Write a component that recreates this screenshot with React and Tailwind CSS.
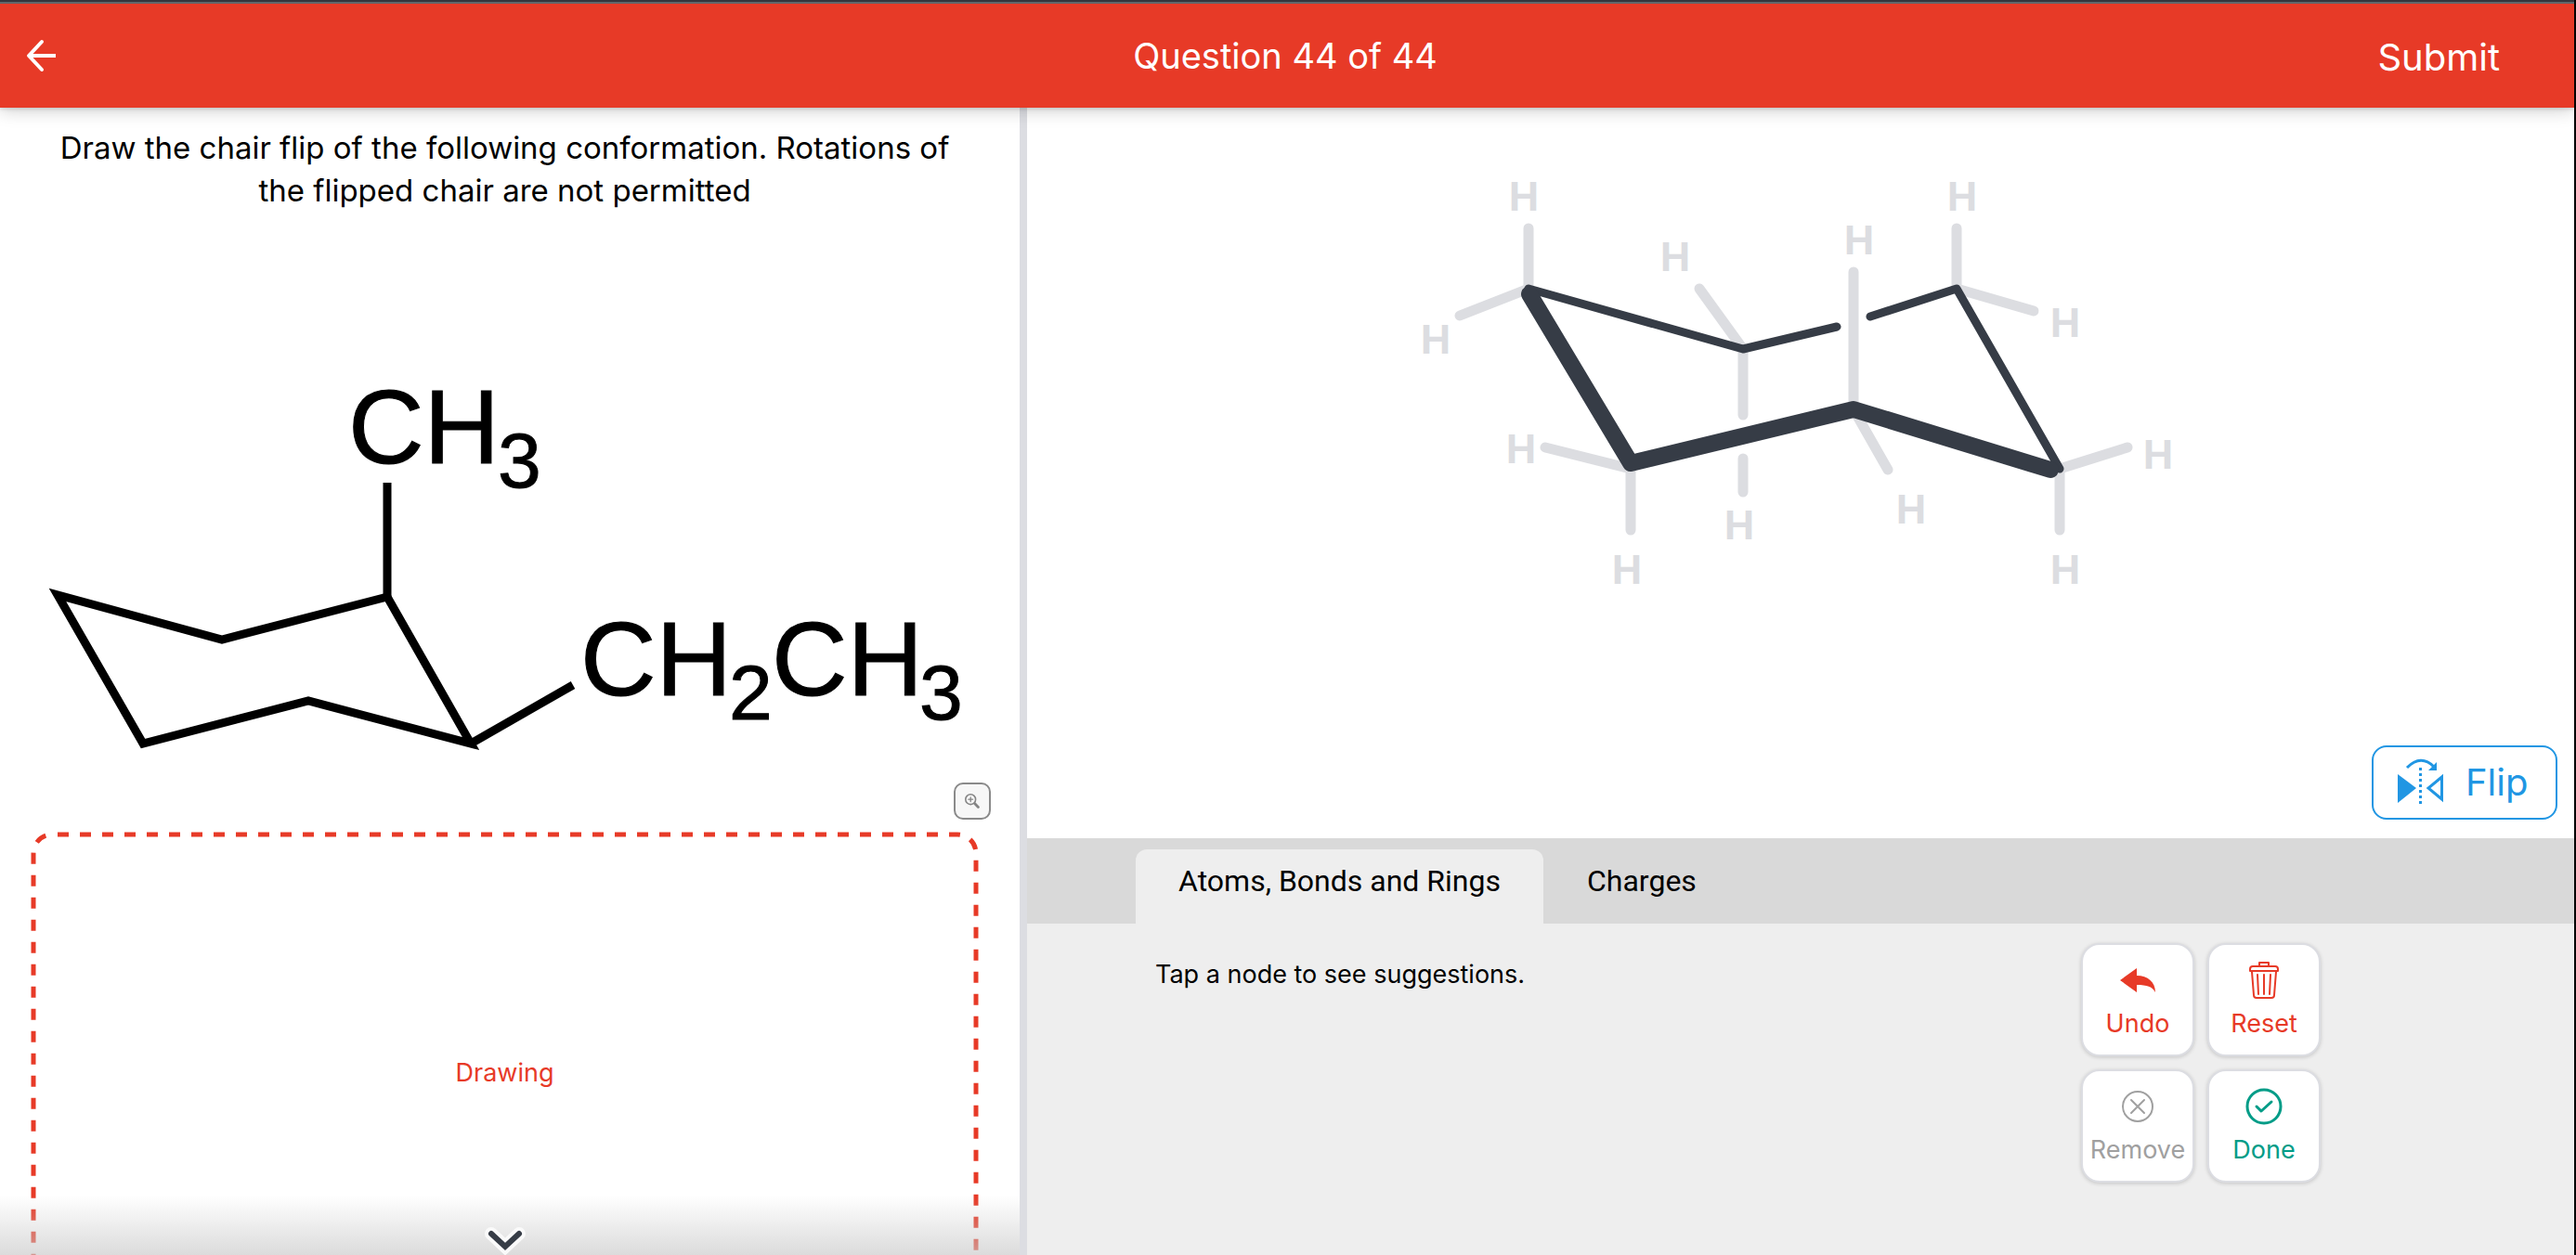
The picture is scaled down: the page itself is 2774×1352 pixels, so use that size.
import React from "react";

const HYDROGEN_BONDS = [
  [126, 121, 126, 56],
  [126, 121, 52, 150],
  [357, 186, 310, 121],
  [357, 186, 357, 257],
  [357, 304, 357, 340],
  [236, 315, 144, 292],
  [236, 315, 236, 381],
  [476, 251, 476, 103],
  [476, 251, 513, 316],
  [587, 121, 587, 56],
  [587, 121, 670, 145],
  [698, 315, 771, 292],
  [698, 315, 698, 381],
];

const HYDROGENS = [
  [121, 37],
  [26, 191],
  [284, 102],
  [118, 309],
  [232, 439],
  [353, 391],
  [482, 84],
  [593, 37],
  [704, 173],
  [804, 315],
  [538, 374],
  [704, 439],
];

function Header() {
  return (
    <header className="relative z-10 shrink-0 border-t-2 border-[#34363d] bg-[#e73a27] text-white shadow-[0_2px_18px_rgba(0,0,0,0.22),0_1px_4px_rgba(0,0,0,0.15)]">
      <div className="grid h-[114px] grid-cols-3 items-center border-t-2 border-[#61666a]">
        <button aria-label="Back" className="ml-7 w-9">
          <svg viewBox="0 0 36 36" className="size-9" fill="none" stroke="white" strokeWidth="4">
            <path d="M32 18H3" />
            <path d="M17 3L3 18l14 15" strokeLinecap="round" strokeLinejoin="round" />
          </svg>
        </button>
        <h1 className="pr-1 text-center text-[38px] leading-[48px]">Question 44 of 44</h1>
        <button className="mt-1 mr-20 justify-self-end text-[40px] leading-[48px]">Submit</button>
      </div>
    </header>
  );
}

function PromptMolecule() {
  return (
    <svg viewBox="0 -20 1019 460" className="mt-[152px] w-full shrink-0" role="img" aria-label="Chair conformation with methyl and ethyl groups">
      <g fill="none" stroke="#000" strokeWidth="9" strokeMiterlimit="10">
        <path d="M383 243L205 289L28 241L120 401L298 355L473 401Z" />
        <path d="M383 246V120" />
        <path d="M473 401L583 338" />
      </g>
      <g fontFamily="Liberation Sans, Arial, sans-serif" fontSize="113" stroke="#000" strokeWidth="1">
        <text x="341" y="99">
          CH<tspan x="502" y="125" fontSize="84">3</tspan>
        </text>
        <text x="591" y="349">
          CH<tspan x="751" y="375" fontSize="84">2</tspan>
          <tspan x="797" y="349">CH</tspan>
          <tspan x="956" y="375" fontSize="84">3</tspan>
        </text>
      </g>
    </svg>
  );
}

function QuestionPane() {
  return (
    <section className="relative flex w-[1106px] shrink-0 flex-col overflow-hidden border-r-8 border-[#dcdde2] bg-white pr-[45px] pl-[34px]">
      <p className="mt-5 px-6 text-center text-[33px] leading-[46px]">
        Draw the chair flip of the following conformation. Rotations of the flipped chair are not permitted
      </p>
      <PromptMolecule />
      <button aria-label="Zoom in" className="mt-[3px] -mr-3.5 flex size-10 shrink-0 items-center justify-center self-end rounded-[10px] border-2 border-[#8a8a8a] bg-[#f7f7f7]">
        <svg viewBox="0 0 16 16" className="size-4" fill="none" stroke="#858585" strokeLinecap="round">
          <circle cx="6.2" cy="6.2" r="5.4" strokeWidth="1.6" />
          <path d="M6.2 3.9v4.6M3.9 6.2h4.6" strokeWidth="1.3" />
          <path d="M10.8 10.8l3.6 3.6" strokeWidth="2.8" />
        </svg>
      </button>
      <div className="relative mt-[14px] flex h-[519px] shrink-0 items-center justify-center text-[27px] text-[#e73a27]">
        <svg className="absolute inset-0.5 h-[calc(100%-4px)] w-[calc(100%-4px)] overflow-visible" fill="none" aria-hidden="true">
          <rect width="100%" height="100%" rx="20" stroke="#e73a27" strokeWidth="5" strokeDasharray="12 12" strokeDashoffset="-6" />
        </svg>
        Drawing
      </div>
      <div className="pointer-events-none absolute inset-x-0 bottom-0 flex h-16 items-end justify-center bg-linear-to-b from-transparent to-[#c8c8c8]/65 pr-[11px]">
        <svg viewBox="0 0 48 32" className="h-8 w-12" fill="none" strokeLinecap="round">
          <path d="M9 9l15 14L39 9" stroke="#fafafa" strokeWidth="14" />
          <path d="M9 9l15 14L39 9" stroke="#363c46" strokeWidth="6" />
        </svg>
      </div>
    </section>
  );
}

function Canvas() {
  return (
    <div className="relative flex min-h-0 flex-1 items-start justify-center bg-white">
      <svg viewBox="0 -20 838 480" className="mt-[54px] h-[480px] w-[838px]" role="img" aria-label="Cyclohexane chair">
        <g stroke="#dcdde1" strokeWidth="11" strokeLinecap="round">
          {HYDROGEN_BONDS.map(([x1, y1, x2, y2]) => (
            <line key={`${x1}-${x2}-${y2}`} x1={x1} y1={y1} x2={x2} y2={y2} />
          ))}
        </g>
        <g fill="none" stroke="#363c46" strokeLinecap="round" strokeLinejoin="round">
          <path d="M126 121L357 186L458 162M494 151L587 121L698 315" strokeWidth="9" />
          <path d="M127 127L236 309L476 251L688 316" strokeWidth="18" />
        </g>
        <g fill="#dcdde1" fontFamily="Liberation Sans, Arial, sans-serif" fontSize="45" fontWeight="700" textAnchor="middle">
          {HYDROGENS.map(([x, y]) => (
            <text key={`${x}-${y}`} x={x} y={y}>H</text>
          ))}
        </g>
      </svg>
      <button className="absolute right-[18px] bottom-5 flex h-20 w-[200px] items-center rounded-2xl border-2 border-[#2196e3] pl-[26px] text-[40px] leading-[48px] text-[#2196e3]">
        <svg viewBox="0 0 50 52" className="mr-[23px] h-[52px] w-[50px]" fill="none" stroke="#2196e3">
          <path d="M0 17v31l20-16z" fill="#2196e3" stroke="none" />
          <path d="M47.5 20v24L33 32z" strokeWidth="3" />
          <path d="M24.5 10v42" strokeWidth="3" strokeDasharray="3 3" />
          <path d="M10 10Q25-5 39 9" strokeWidth="3" />
          <path d="M33 13l9-9v9z" fill="#2196e3" stroke="none" />
        </svg>
        Flip
      </button>
    </div>
  );
}

function UndoIcon() {
  return (
    <svg viewBox="0 0 40 40" className="size-10" fill="#e73a27">
      <path d="M1 20L19 7v8c12 0 20 7 20 18c-3-6-9-8-20-8v8z" />
    </svg>
  );
}

function TrashIcon() {
  return (
    <svg viewBox="0 0 40 40" className="size-10" fill="none" stroke="#e73a27" strokeWidth="2" strokeLinecap="round" strokeLinejoin="round">
      <path d="M15 5V1h10v4" />
      <path d="M5 10V8q0-3 3-3h24q3 0 3 3v2z" />
      <path d="M7 11l2 25q0 3 3 3h16q3 0 3-3l2-25" />
      <path d="M13 14l1 21M20 14v21M27 14l-1 21" />
    </svg>
  );
}

function RemoveIcon() {
  return (
    <svg viewBox="0 0 40 40" className="size-10" fill="none" stroke="#a0a0a0" strokeWidth="2" strokeLinecap="round">
      <circle cx="20" cy="20" r="16" />
      <path d="M13 13l14 14M27 13L13 27" />
    </svg>
  );
}

function DoneIcon() {
  return (
    <svg viewBox="0 0 40 40" className="size-10" fill="none" stroke="#009c87" strokeWidth="3" strokeLinecap="round" strokeLinejoin="round">
      <circle cx="20" cy="20" r="18" />
      <path d="M12 20l5 5L28 15" />
    </svg>
  );
}

function ToolButton({ icon, label, tone, disabled }) {
  return (
    <button disabled={disabled} className={`flex size-[122px] flex-col items-center rounded-[20px] border-2 border-[#dcdde2] bg-white pt-[18px] text-[27px] leading-[34px] shadow-[0_1px_4px_rgba(0,0,0,0.18)] ${tone}`}>
      {icon}
      <span className="mt-2.5">{label}</span>
    </button>
  );
}

function ToolPanel() {
  return (
    <div className="flex h-[449px] shrink-0 flex-col bg-[#eeeeee]">
      <div role="tablist" className="flex h-[92px] shrink-0 items-end bg-[#d9d9d9] pl-[117px] font-[Roboto,sans-serif] text-[32px] leading-10">
        <button role="tab" aria-selected="true" className="h-20 w-[439px] rounded-t-xl bg-[#eeeeee] pb-3">Atoms, Bonds and Rings</button>
        <button role="tab" aria-selected="false" className="h-20 px-[47px] pb-3">Charges</button>
      </div>
      <div className="flex items-start justify-between pt-[21px] pr-[273px] pl-[138px]">
        <p className="pt-[17px] text-[27px] leading-[34px]">Tap a node to see suggestions.</p>
        <div className="grid grid-cols-2 gap-3.5">
          <ToolButton icon={<UndoIcon />} label="Undo" tone="text-[#e73a27]" />
          <ToolButton icon={<TrashIcon />} label="Reset" tone="text-[#e73a27]" />
          <ToolButton icon={<RemoveIcon />} label="Remove" tone="text-[#a0a0a0]" disabled />
          <ToolButton icon={<DoneIcon />} label="Done" tone="text-[#009c87]" />
        </div>
      </div>
    </div>
  );
}

export default function App() {
  return (
    <div className="flex h-screen flex-col overflow-hidden border-r-2 border-black bg-white font-[Inter,sans-serif] text-black">
      <Header />
      <main className="flex min-h-0 flex-1">
        <QuestionPane />
        <section className="flex min-w-0 flex-1 flex-col">
          <Canvas />
          <ToolPanel />
        </section>
      </main>
    </div>
  );
}
